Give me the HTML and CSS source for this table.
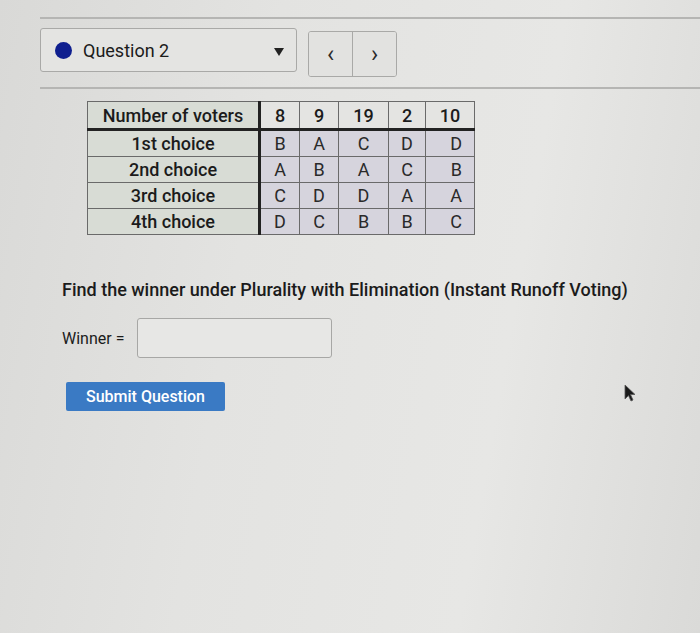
FILE: index.html
```html
<!DOCTYPE html>
<html>
<head>
<meta charset="utf-8">
<link rel="stylesheet" href="styles.css">
</head>
<body>
<div class="page">
  <div class="rule rule-top"></div>
  <div class="navbar">
    <div class="qselect">
      <span class="dot"></span>
      <span class="qlabel">Question 2</span>
      <span class="caret"></span>
    </div>
    <div class="navbtns">
      <span class="navbtn">&lsaquo;</span>
      <span class="navbtn">&rsaquo;</span>
    </div>
  </div>
  <div class="rule rule-mid"></div>

  <table class="votes">
    <tr class="head">
      <th class="lbl">Number of voters</th>
      <th class="c1">8</th><th class="c2">9</th><th class="c3">19</th><th class="c4">2</th><th class="c5">10</th>
    </tr>
    <tr><th class="lbl">1st choice</th><td>B</td><td>A</td><td>C</td><td>D</td><td class="r">D</td></tr>
    <tr><th class="lbl">2nd choice</th><td>A</td><td>B</td><td>A</td><td>C</td><td class="r">B</td></tr>
    <tr><th class="lbl">3rd choice</th><td>C</td><td>D</td><td>D</td><td>A</td><td class="r">A</td></tr>
    <tr><th class="lbl">4th choice</th><td>D</td><td>C</td><td>B</td><td>B</td><td class="r">C</td></tr>
  </table>

  <p class="prompt">Find the winner under Plurality with Elimination (Instant Runoff Voting)</p>

  <div class="answer">
    <span class="alabel">Winner =</span>
    <span class="ainput"></span>
  </div>

  <span class="submit">Submit Question</span>

  <svg class="cursor" width="14" height="20" viewBox="0 0 14 20"><path d="M1 1 L1 15 L4.5 11.5 L7 17 L9 16 L6.5 10.5 L11 10.5 Z" fill="#1a1a1a" stroke="#555" stroke-width="0.8"/></svg>
</div>
</body>
</html>
```

FILE: styles.css
```css
html, body {
  margin: 0;
  padding: 0;
}
body {
  background: #e1e1df;
  font-family: Roboto, "Open Sans", sans-serif;
  color: #1b1b1b;
  width: 700px;
  height: 633px;
  overflow: hidden;
}
.page {
  position: relative;
  padding-top: 17px;
  height: 616px;
  background: linear-gradient(100deg, #d9d9d7 0%, #e3e3e1 35%, #e7e7e5 70%, #dadad8 100%);
}
.rule {
  height: 2px;
  background: #b5b5b3;
  margin-left: 40px;
}
.rule-mid {
  margin-top: 10px;
}
.navbar {
  display: flex;
  align-items: flex-start;
  gap: 11px;
  margin-left: 40px;
  margin-top: 9px;
}
.qselect {
  width: 257px;
  height: 44px;
  box-sizing: border-box;
  border: 1px solid #a9a9a7;
  border-radius: 3px;
  background: #e4e4e2;
  display: flex;
  align-items: center;
  padding-left: 14px;
  padding-right: 12px;
}
.dot {
  width: 17px;
  height: 17px;
  border-radius: 50%;
  background: #0f1f8f;
  margin-right: 11px;
}
.qlabel {
  font-size: 18px;
  flex: 1;
}
.caret {
  width: 0;
  height: 0;
  border-left: 5px solid transparent;
  border-right: 5px solid transparent;
  border-top: 8px solid #222;
  margin-top: 4px;
}
.navbtns {
  display: flex;
  margin-top: 3px;
  border: 1px solid #a9a9a7;
  border-radius: 3px;
  overflow: hidden;
}
.navbtn {
  width: 43px;
  height: 44px;
  display: flex;
  align-items: center;
  justify-content: center;
  font-size: 24px;
  background: #e2e2e0;
  color: #2a2a2a;
}
.navbtn + .navbtn {
  border-left: 1px solid #a9a9a7;
}

.votes {
  margin-left: 87px;
  margin-top: 12px;
  border-collapse: collapse;
  font-size: 18px;
  font-weight: 500;
  background: #f0f0ee;
  border: 1px solid #666;
}
.votes th, .votes td {
  border: 1px solid #6a6a6a;
  padding: 0;
  height: 25px;
  font-weight: 500;
  text-align: center;
}
.votes th.lbl {
  width: 170px;
  background: #d8dcd5;
}
.votes .head th {
  height: 26px;
  background: #e4e4e2;
  border-bottom: 3px solid #222;
}
.votes .head th.lbl {
  background: #d8dcd5;
}
.votes .c1 { width: 38px; border-left: 3px solid #222; }
.votes .c2 { width: 38px; }
.votes .c3 { width: 49px; }
.votes .c4 { width: 36px; }
.votes .c5 { width: 48px; }
.votes td {
  background: #d6d4dd;
  font-weight: 400;
  color: #2a2a2a;
}
.votes tr td:nth-child(2) {
  border-left: 3px solid #222;
}
.votes td.r {
  text-align: right;
  padding-right: 12px;
}
.prompt {
  margin: 44px 0 0 62px;
  font-size: 18px;
  font-weight: 500;
}
.answer {
  display: flex;
  align-items: center;
  margin: 18px 0 0 62px;
  gap: 13px;
}
.alabel {
  font-size: 16px;
}
.ainput {
  width: 193px;
  height: 38px;
  border: 1px solid #a7a7a5;
  border-radius: 3px;
  background: #e7e7e5;
}
.submit {
  display: inline-block;
  margin: 24px 0 0 66px;
  width: 159px;
  height: 29px;
  line-height: 29px;
  text-align: center;
  background: #3a7ac4;
  color: #fff;
  font-size: 16px;
  font-weight: 500;
  border-radius: 2px;
}
.cursor {
  position: absolute;
  left: 624px;
  top: 384px;
}
```
